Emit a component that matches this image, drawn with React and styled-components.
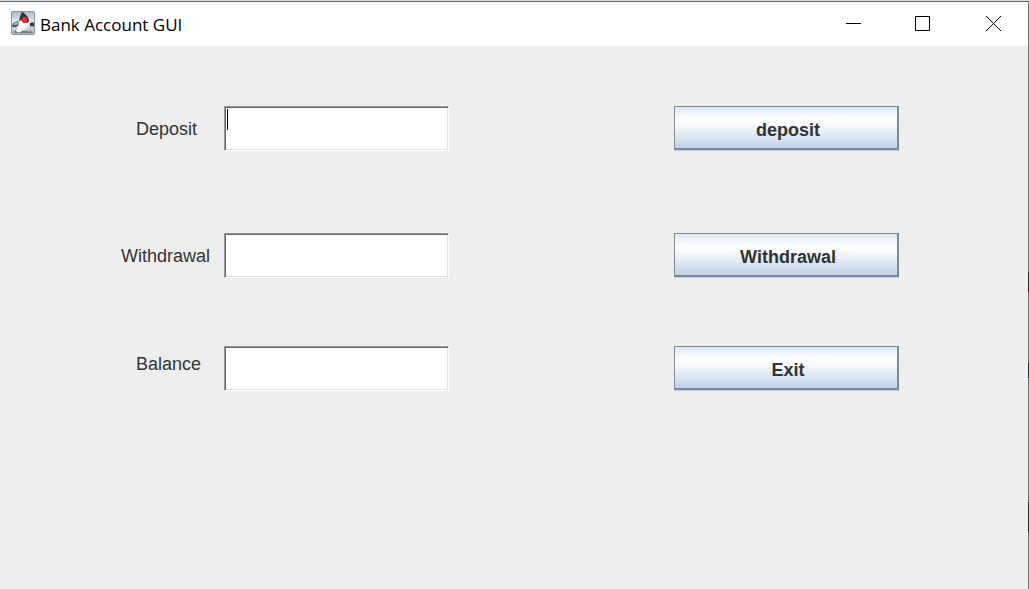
import React from "react";
import { useState } from "react";
import styled, { createGlobalStyle } from "styled-components";

const GlobalStyle = createGlobalStyle`
  * {
    box-sizing: border-box;
  }

  body {
    margin: 0;
    background-color: #dcdcdc;
  }
`;

const Frame = styled.div`
  display: flex;
  min-height: 100vh;
  padding-top: 1px;
`;

const Window = styled.main`
  flex: 1;
  display: flex;
  flex-direction: column;
  border-top: 1px solid #6b6b6b;
  background-color: #eeeeee;
  font-family: "Liberation Sans", Arial, sans-serif;
`;

const FrameEdge = styled.div`
  width: 1px;
  background: linear-gradient(
    #6f6f6f 271px,
    #2f2629 271px 291px,
    #6f6f6f 291px 362px,
    #26292c 362px 377px,
    #6f6f6f 377px 501px,
    #262626 501px 531px,
    #6f6f6f 531px
  );
`;

const TitleBar = styled.header`
  display: flex;
  align-items: center;
  height: 44px;
  padding: 0 0 2px 11px;
  background-color: #ffffff;
`;

const Title = styled.h1`
  flex: 1;
  margin: 0;
  padding: 4px 0 0 5px;
  font-family: "Open Sans", "Noto Sans", sans-serif;
  font-size: 17px;
  font-weight: normal;
  line-height: 24px;
  color: #000000;
`;

const WindowButton = styled.button`
  display: flex;
  align-items: center;
  justify-content: center;
  align-self: stretch;
  width: 70px;
  padding: 0;
  border: none;
  background-color: transparent;

  &:hover {
    background-color: #e5e5e5;
  }
`;

const Form = styled.form`
  display: flex;
  flex-direction: column;
  padding-top: 60px;
`;

const Row = styled.div`
  display: grid;
  grid-template-columns: 121fr 103fr 225fr 225fr 225fr 129fr;
  height: 45px;
  margin-bottom: ${(props) => props.$space}px;
`;

const Label = styled.label`
  grid-column: 2;
  padding-left: ${(props) => (props.$indent ? "15px" : "0")};
  font-size: 18px;
  line-height: ${(props) => (props.$raised ? "36px" : "47px")};
  color: #333333;
`;

const Field = styled.div`
  grid-column: 3;
  position: relative;
`;

const Input = styled.input`
  display: block;
  width: 100%;
  height: 45px;
  padding: 0 2px 16px;
  border: 1px solid;
  border-color: #999999 #ffffff #ffffff #999999;
  border-radius: 0;
  outline: none;
  background-color: #ffffff;
  box-shadow: inset 1px 1px #666666, inset -1px -1px #e3e3e3;
  font-family: inherit;
  font-size: 18px;
  color: #333333;
`;

const Caret = styled.span`
  position: absolute;
  top: 3px;
  left: 3px;
  width: 1px;
  height: 21px;
  background-color: #000000;
  pointer-events: none;
`;

const ActionButton = styled.button`
  grid-column: 5;
  height: 44px;
  padding: 5px 0 0 4px;
  border: 1px solid #7a8a99;
  border-right-width: 2px;
  border-bottom-width: 2px;
  border-radius: 0;
  background: linear-gradient(#dde8f3, #ffffff 30%, #ffffff 36%, #bed3e7);
  box-shadow: 0 1px #b8cfe5;
  font-family: inherit;
  font-size: 18px;
  font-weight: bold;
  color: #333333;
`;

function DukeIcon() {
  return (
    <svg width="24" height="24" viewBox="0 0 24 24" aria-hidden="true">
      <defs>
        <linearGradient id="tile" x1="0" y1="0" x2="0" y2="1">
          <stop offset="0" stopColor="#a9b9c9" />
          <stop offset="0.5" stopColor="#e9eef3" />
          <stop offset="1" stopColor="#9fb0c0" />
        </linearGradient>
        <linearGradient id="belly" x1="0" y1="0" x2="1" y2="1">
          <stop offset="0.5" stopColor="#ffffff" />
          <stop offset="1" stopColor="#a2a2a2" />
        </linearGradient>
      </defs>
      <rect x="0.5" y="0.5" width="23" height="23" rx="1" fill="url(#tile)" stroke="#8497aa" />
      <path d="M2 12 7 10 8 14 5 16 1 16Z" fill="#4a5057" />
      <path d="M3 12 7 11 6 14 3 14Z" fill="#8fc4e8" />
      <path d="M18 13 21 11 23 12 23 16 21 15 19 16Z" fill="#3b3f44" />
      <path d="M3 20Q5 19 7 20H20L22 22H4Z" fill="#74797e" />
      <path d="M8 9 18 9Q19 13 20 20Q18 22 15 19Q13 18 11 20Q8 23 5 20Q8 16 8 9Z" fill="url(#belly)" />
      <path d="M11 1Q12 1 14 3Q18 6 18 11L16 12 10 9 8 11Q8 6 11 1Z" fill="#33363a" />
      <circle cx="13.5" cy="9" r="3" fill="#e32a28" />
      <circle cx="13" cy="8" r="1" fill="#f4574f" />
    </svg>
  );
}

function WindowIcon({ d }) {
  return (
    <svg width="16" height="16" viewBox="0 0 16 16" aria-hidden="true">
      <path d={d} fill="none" stroke="#000000" />
    </svg>
  );
}

const windowButtons = [
  { name: "Minimize", d: "M1 8.5H16" },
  { name: "Maximize", d: "M0.5 1.5H14.5V15.5H0.5Z" },
  { name: "Close", d: "M1 1 16 16M16 1 1 16" },
];

const rows = [
  { id: "deposit", label: "Deposit", action: "deposit", indent: true, space: 82 },
  { id: "withdrawal", label: "Withdrawal", action: "Withdrawal", space: 68 },
  { id: "balance", label: "Balance", action: "Exit", indent: true, raised: true, space: 0 },
];

function App() {
  const [values, setValues] = useState({ deposit: "", withdrawal: "", balance: "" });
  const [touched, setTouched] = useState(false);

  const changeHandler = (e) => {
    setValues({ ...values, [e.target.id]: e.target.value });
  };

  return (
    <>
      <GlobalStyle />
      <Frame>
        <Window>
          <TitleBar>
            <DukeIcon />
            <Title>Bank Account GUI</Title>
            {windowButtons.map(({ name, d }) => (
              <WindowButton key={name} type="button" aria-label={name}>
                <WindowIcon d={d} />
              </WindowButton>
            ))}
          </TitleBar>
          <Form onSubmit={(e) => e.preventDefault()}>
            {rows.map((row) => (
              <Row key={row.id} $space={row.space}>
                <Label htmlFor={row.id} $indent={row.indent} $raised={row.raised}>
                  {row.label}
                </Label>
                <Field>
                  <Input
                    id={row.id}
                    type="text"
                    value={values[row.id]}
                    onChange={changeHandler}
                    onFocus={() => setTouched(true)}
                  />
                  {/* resting caret until a field takes the focus */}
                  {row.id === "deposit" && !touched && <Caret />}
                </Field>
                <ActionButton type="button">{row.action}</ActionButton>
              </Row>
            ))}
          </Form>
        </Window>
        <FrameEdge />
      </Frame>
    </>
  );
}

export default App;
